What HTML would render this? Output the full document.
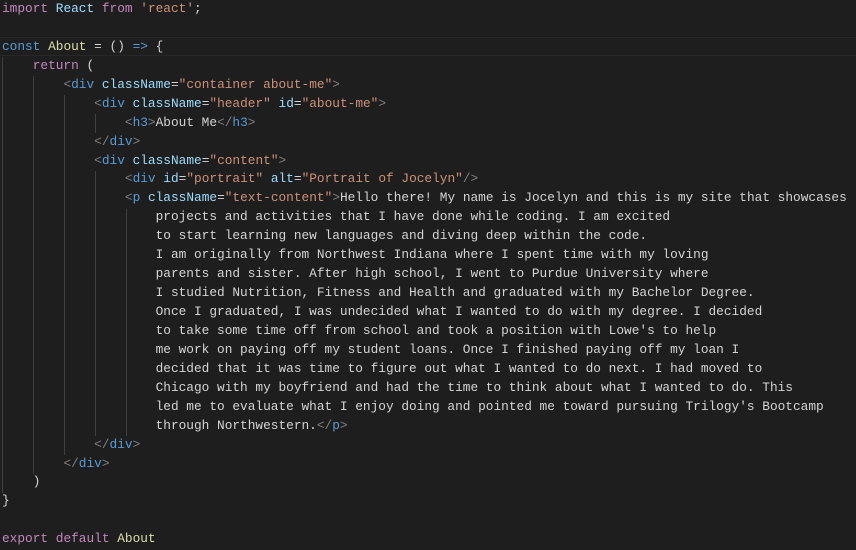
<!DOCTYPE html>
<html><head><style>
body{margin:0;background:#1e1e1e;width:856px;height:550px;overflow:hidden;position:relative}
pre{margin:0;position:absolute;left:2px;top:0;font-family:"Liberation Mono",monospace;font-size:12.8px;line-height:18.93px;color:#d4d4d4;white-space:pre}
.k{color:#c586c0}.v{color:#9cdcfe}.s{color:#ce9178}.b{color:#569cd6}.f{color:#dcdcaa}.g{color:#808080}.a{color:#9cdcfe}
.hl{position:absolute;left:0;top:37px;width:856px;height:17px;border-top:1px solid #282828;border-bottom:1px solid #282828}
.gd{position:absolute;width:1px;background:#404040}
</style></head><body>
<div class="hl"></div>
<div class="gd" style="left:2px;top:57px;height:436px"></div>
<div class="gd" style="left:33px;top:76px;height:398px"></div>
<div class="gd" style="left:64px;top:95px;height:360px"></div>
<div class="gd" style="left:95px;top:114px;height:19px"></div>
<div class="gd" style="left:95px;top:171px;height:265px"></div>
<div class="gd" style="left:126px;top:209px;height:227px"></div>
<pre><span class="k">import</span> <span class="v">React</span> <span class="k">from</span> <span class="s">'react'</span>;

<span class="b">const</span> <span class="f">About</span> = () <span class="b">=&gt;</span> {
    <span class="k">return</span> (
        <span class="g">&lt;</span><span class="b">div</span> <span class="a">className</span>=<span class="s">"container about-me"</span><span class="g">&gt;</span>
            <span class="g">&lt;</span><span class="b">div</span> <span class="a">className</span>=<span class="s">"header"</span> <span class="a">id</span>=<span class="s">"about-me"</span><span class="g">&gt;</span>
                <span class="g">&lt;</span><span class="b">h3</span><span class="g">&gt;</span>About Me<span class="g">&lt;/</span><span class="b">h3</span><span class="g">&gt;</span>
            <span class="g">&lt;/</span><span class="b">div</span><span class="g">&gt;</span>
            <span class="g">&lt;</span><span class="b">div</span> <span class="a">className</span>=<span class="s">"content"</span><span class="g">&gt;</span>
                <span class="g">&lt;</span><span class="b">div</span> <span class="a">id</span>=<span class="s">"portrait"</span> <span class="a">alt</span>=<span class="s">"Portrait of Jocelyn"</span><span class="g">/&gt;</span>
                <span class="g">&lt;</span><span class="b">p</span> <span class="a">className</span>=<span class="s">"text-content"</span><span class="g">&gt;</span>Hello there! My name is Jocelyn and this is my site that showcases
                    projects and activities that I have done while coding. I am excited
                    to start learning new languages and diving deep within the code.
                    I am originally from Northwest Indiana where I spent time with my loving
                    parents and sister. After high school, I went to Purdue University where
                    I studied Nutrition, Fitness and Health and graduated with my Bachelor Degree.
                    Once I graduated, I was undecided what I wanted to do with my degree. I decided
                    to take some time off from school and took a position with Lowe's to help
                    me work on paying off my student loans. Once I finished paying off my loan I
                    decided that it was time to figure out what I wanted to do next. I had moved to
                    Chicago with my boyfriend and had the time to think about what I wanted to do. This
                    led me to evaluate what I enjoy doing and pointed me toward pursuing Trilogy's Bootcamp
                    through Northwestern.<span class="g">&lt;/</span><span class="b">p</span><span class="g">&gt;</span>
            <span class="g">&lt;/</span><span class="b">div</span><span class="g">&gt;</span>
        <span class="g">&lt;/</span><span class="b">div</span><span class="g">&gt;</span>
    )
}

<span class="k">export</span> <span class="k">default</span> <span class="f">About</span></pre>
</body></html>
